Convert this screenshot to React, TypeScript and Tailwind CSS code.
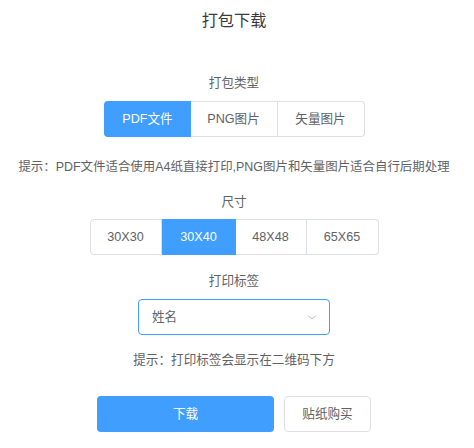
import React from "react";

const font = { fontFamily: '"Liberation Sans", "Noto Sans CJK SC", sans-serif' };

export default function App() {
  const types = ["PDF文件", "PNG图片", "矢量图片"];
  const sizes = [
    { t: "30X30", w: "w-[72px]" },
    { t: "30X40", w: "w-[74px]" },
    { t: "48X48", w: "w-[71px]" },
    { t: "65X65", w: "w-[72px]" },
  ];
  return (
    <div className="w-[468px] h-[448px] bg-white text-[#606266] flex flex-col items-center" style={font}>
      <div className="mt-[9px] h-[22px] leading-[22px] text-[16.2px] text-[#3a3b3d]">打包下载</div>

      <div className="mt-[43px] h-[18px] leading-[18px] text-[12.6px]">打包类型</div>

      <div className="mt-[9px] flex h-[36px]">
        {types.map((t, i) => (
          <div
            key={t}
            className={
              "w-[87px] h-[36px] flex items-center justify-center text-[12.6px] border-y " +
              (i === 0
                ? "bg-[#409eff] text-white border-[#409eff] border-l rounded-l-[4px]"
                : "bg-white border-[#dcdfe6] border-r") +
              (i === 2 ? " rounded-r-[4px]" : "")
            }
          >
            {t}
          </div>
        ))}
      </div>

      <div className="mt-[21px] h-[18px] leading-[18px] text-[12.45px] whitespace-nowrap">
        提示：PDF文件适合使用A4纸直接打印,PNG图片和矢量图片适合自行后期处理
      </div>

      <div className="mt-[17px] h-[18px] leading-[18px] text-[12.6px]">尺寸</div>

      <div className="mt-[8px] flex h-[36px]">
        {sizes.map((s, i) => (
          <div
            key={s.t}
            className={
              s.w +
              " h-[36px] flex items-center justify-center text-[12.6px] border-y " +
              (i === 1
                ? "bg-[#409eff] text-white border-[#409eff]"
                : "bg-white border-[#dcdfe6] border-r") +
              (i === 0 ? " border-l rounded-l-[4px]" : "") +
              (i === 3 ? " rounded-r-[4px]" : "")
            }
          >
            {s.t}
          </div>
        ))}
      </div>

      <div className="mt-[17px] h-[18px] leading-[18px] text-[12.6px]">打印标签</div>

      <div className="mt-[9px] w-[192px] h-[36px] border border-[#409eff] rounded-[4px] flex items-center justify-between pl-[13px] pr-[11px] text-[12.6px]">
        <span>姓名</span>
        <svg width="12" height="12" viewBox="0 0 12 12" fill="none">
          <path d="M2 4.5 L6 8 L10 4.5" stroke="#c0c4cc" strokeWidth="1" />
        </svg>
      </div>

      <div className="mt-[16px] h-[18px] leading-[18px] text-[12.6px]">提示：打印标签会显示在二维码下方</div>

      <div className="mt-[27px] flex gap-[10px]">
        <div className="w-[177px] h-[36px] rounded-[4px] bg-[#409eff] text-white flex items-center justify-center text-[12.6px]">
          下载
        </div>
        <div className="w-[87px] h-[36px] rounded-[4px] bg-white border border-[#dcdfe6] flex items-center justify-center text-[12.6px]">
          贴纸购买
        </div>
      </div>
    </div>
  );
}
